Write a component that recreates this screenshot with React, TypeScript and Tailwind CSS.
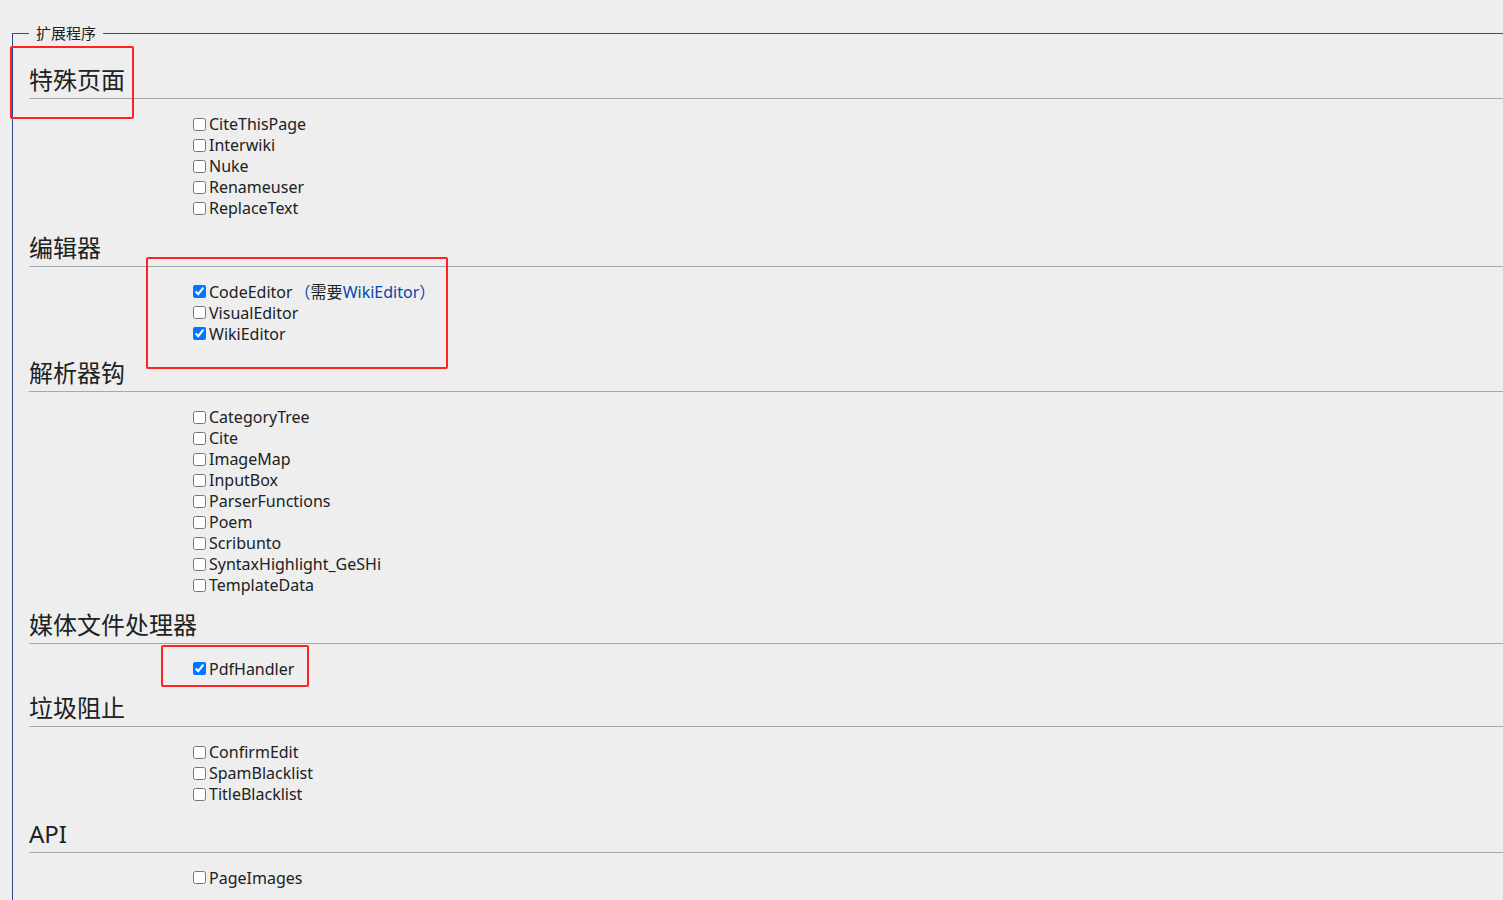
const sections: { title: string; items: { name: string; checked?: boolean; note?: boolean }[] }[] = [
  {
    title: '特殊页面',
    items: [{ name: 'CiteThisPage' }, { name: 'Interwiki' }, { name: 'Nuke' }, { name: 'Renameuser' }, { name: 'ReplaceText' }],
  },
  {
    title: '编辑器',
    items: [
      { name: 'CodeEditor', checked: true, note: true },
      { name: 'VisualEditor' },
      { name: 'WikiEditor', checked: true },
    ],
  },
  {
    title: '解析器钩',
    items: [
      { name: 'CategoryTree' },
      { name: 'Cite' },
      { name: 'ImageMap' },
      { name: 'InputBox' },
      { name: 'ParserFunctions' },
      { name: 'Poem' },
      { name: 'Scribunto' },
      { name: 'SyntaxHighlight_GeSHi' },
      { name: 'TemplateData' },
    ],
  },
  {
    title: '媒体文件处理器',
    items: [{ name: 'PdfHandler', checked: true }],
  },
  {
    title: '垃圾阻止',
    items: [{ name: 'ConfirmEdit' }, { name: 'SpamBlacklist' }, { name: 'TitleBlacklist' }],
  },
  {
    title: 'API',
    items: [{ name: 'PageImages' }],
  },
];

const font = { fontFamily: '"Noto Sans", "Noto Sans CJK SC", sans-serif' };

export default function App() {
  return (
    <div className="relative h-[900px] overflow-hidden bg-[#eeeeee] text-[#202122]" style={font}>
      <div className="pl-[12px] pt-[25px]">
        <fieldset className="min-h-[1000px] w-[1600px] border-t border-l border-[#2a4b8d] pl-[16px]">
          <legend className="px-[7px] text-[15px] leading-[17px]">扩展程序</legend>
          {sections.map((s, i) => (
            <div key={s.title} className={i === 0 ? 'mt-[22px]' : 'mt-[13px]'}>
              <h2 className="border-b border-[#a2a9b1] pb-[3px] text-[24px] leading-[31px]">{s.title}</h2>
              <ul className="mt-[14.5px] ml-[164px]">
                {s.items.map((it) => (
                  <li key={it.name} className="flex h-[21px] items-center text-[16px]">
                    <input type="checkbox" defaultChecked={!!it.checked} className="m-0 h-[13px] w-[13px]" />
                    <span className="ml-[3px]">{it.name}</span>
                    {it.note && (
                      <span className="ml-[2px]">
                        <span className="text-[#0645ad]">（</span>需要<span className="text-[#0645ad]">WikiEditor）</span>
                      </span>
                    )}
                  </li>
                ))}
              </ul>
            </div>
          ))}
        </fieldset>
      </div>
      <div className="absolute left-[10px] top-[46px] h-[73px] w-[124px] rounded-[2px] border-2 border-[#ff2222]" />
      <div className="absolute left-[146px] top-[257px] h-[112px] w-[302px] rounded-[2px] border-2 border-[#ff2222]" />
      <div className="absolute left-[161px] top-[645px] h-[42px] w-[148px] rounded-[2px] border-2 border-[#ff2222]" />
    </div>
  );
}
